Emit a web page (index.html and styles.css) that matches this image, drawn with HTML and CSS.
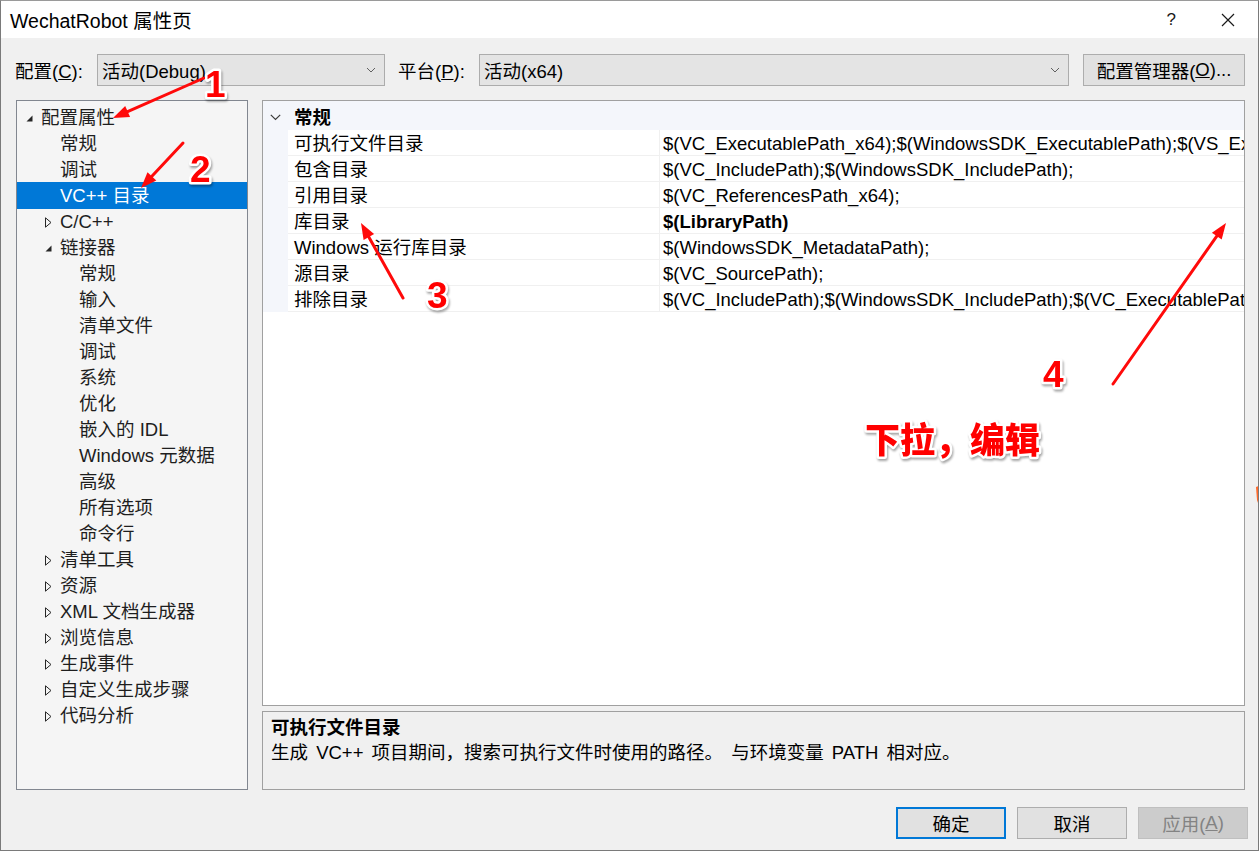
FILE: index.html
```html
<!DOCTYPE html>
<html lang="zh-CN">
<head>
<meta charset="utf-8">
<title>WechatRobot 属性页</title>
<link rel="stylesheet" href="styles.css">
</head>
<body>
<div class="window">
  <div class="titlebar">
    <span class="title">WechatRobot 属性页</span>
    <span class="tb-help">?</span>
    <svg class="tb-close" width="14" height="14" viewBox="0 0 14 14"><path d="M1 1 L13 13 M13 1 L1 13" stroke="#1a1a1a" stroke-width="1.2" fill="none"/></svg>
  </div>
  <div class="content">
    <div class="toprow">
      <span class="lbl lbl1">配置(<u>C</u>):</span>
      <div class="combo combo1"><span>活动(Debug)</span><svg class="chev" width="10" height="6" viewBox="0 0 10 6"><path d="M1 1 L5 5 L9 1" stroke="#606060" stroke-width="1" fill="none"/></svg></div>
      <span class="lbl lbl2">平台(<u>P</u>):</span>
      <div class="combo combo2"><span>活动(x64)</span><svg class="chev" width="10" height="6" viewBox="0 0 10 6"><path d="M1 1 L5 5 L9 1" stroke="#606060" stroke-width="1" fill="none"/></svg></div>
      <div class="btn btn-mgr">配置管理器(<u>O</u>)...</div>
    </div>
    <div class="main">
      <div class="tree">
        <div class="node l0"><span class="tw"><svg width="7" height="7" viewBox="0 0 7 7"><path d="M6.5 0.5 L6.5 6.5 L0.5 6.5 Z" fill="#262626"/></svg></span>配置属性</div>
        <div class="node l1"><span class="tw"></span>常规</div>
        <div class="node l1"><span class="tw"></span>调试</div>
        <div class="node l1 sel"><span class="tw"></span>VC++ 目录</div>
        <div class="node l1"><span class="tw"><svg width="7" height="11" viewBox="0 0 7 11"><path d="M0.5 0.8 L6 5.5 L0.5 10.2 Z" fill="none" stroke="#262626" stroke-width="1"/></svg></span>C/C++</div>
        <div class="node l1"><span class="tw"><svg width="7" height="7" viewBox="0 0 7 7"><path d="M6.5 0.5 L6.5 6.5 L0.5 6.5 Z" fill="#262626"/></svg></span>链接器</div>
        <div class="node l2"><span class="tw"></span>常规</div>
        <div class="node l2"><span class="tw"></span>输入</div>
        <div class="node l2"><span class="tw"></span>清单文件</div>
        <div class="node l2"><span class="tw"></span>调试</div>
        <div class="node l2"><span class="tw"></span>系统</div>
        <div class="node l2"><span class="tw"></span>优化</div>
        <div class="node l2"><span class="tw"></span>嵌入的 IDL</div>
        <div class="node l2"><span class="tw"></span>Windows 元数据</div>
        <div class="node l2"><span class="tw"></span>高级</div>
        <div class="node l2"><span class="tw"></span>所有选项</div>
        <div class="node l2"><span class="tw"></span>命令行</div>
        <div class="node l1"><span class="tw"><svg width="7" height="11" viewBox="0 0 7 11"><path d="M0.5 0.8 L6 5.5 L0.5 10.2 Z" fill="none" stroke="#262626" stroke-width="1"/></svg></span>清单工具</div>
        <div class="node l1"><span class="tw"><svg width="7" height="11" viewBox="0 0 7 11"><path d="M0.5 0.8 L6 5.5 L0.5 10.2 Z" fill="none" stroke="#262626" stroke-width="1"/></svg></span>资源</div>
        <div class="node l1"><span class="tw"><svg width="7" height="11" viewBox="0 0 7 11"><path d="M0.5 0.8 L6 5.5 L0.5 10.2 Z" fill="none" stroke="#262626" stroke-width="1"/></svg></span>XML 文档生成器</div>
        <div class="node l1"><span class="tw"><svg width="7" height="11" viewBox="0 0 7 11"><path d="M0.5 0.8 L6 5.5 L0.5 10.2 Z" fill="none" stroke="#262626" stroke-width="1"/></svg></span>浏览信息</div>
        <div class="node l1"><span class="tw"><svg width="7" height="11" viewBox="0 0 7 11"><path d="M0.5 0.8 L6 5.5 L0.5 10.2 Z" fill="none" stroke="#262626" stroke-width="1"/></svg></span>生成事件</div>
        <div class="node l1"><span class="tw"><svg width="7" height="11" viewBox="0 0 7 11"><path d="M0.5 0.8 L6 5.5 L0.5 10.2 Z" fill="none" stroke="#262626" stroke-width="1"/></svg></span>自定义生成步骤</div>
        <div class="node l1"><span class="tw"><svg width="7" height="11" viewBox="0 0 7 11"><path d="M0.5 0.8 L6 5.5 L0.5 10.2 Z" fill="none" stroke="#262626" stroke-width="1"/></svg></span>代码分析</div>
      </div>
      <div class="rightcol">
        <div class="grid">
          <div class="cat"><span class="cat-tw"><svg width="11" height="7" viewBox="0 0 11 7"><path d="M0.8 0.8 L5.5 5.5 L10.2 0.8" stroke="#3c3c3c" stroke-width="1.2" fill="none"/></svg></span><b>常规</b></div>
          <div class="prow"><span class="gut"></span><span class="pname">可执行文件目录</span><span class="pval">$(VC_ExecutablePath_x64);$(WindowsSDK_ExecutablePath);$(VS_Exe</span></div>
          <div class="prow"><span class="gut"></span><span class="pname">包含目录</span><span class="pval">$(VC_IncludePath);$(WindowsSDK_IncludePath);</span></div>
          <div class="prow"><span class="gut"></span><span class="pname">引用目录</span><span class="pval">$(VC_ReferencesPath_x64);</span></div>
          <div class="prow"><span class="gut"></span><span class="pname">库目录</span><span class="pval bold">$(LibraryPath)</span></div>
          <div class="prow"><span class="gut"></span><span class="pname">Windows 运行库目录</span><span class="pval">$(WindowsSDK_MetadataPath);</span></div>
          <div class="prow"><span class="gut"></span><span class="pname">源目录</span><span class="pval">$(VC_SourcePath);</span></div>
          <div class="prow"><span class="gut"></span><span class="pname">排除目录</span><span class="pval">$(VC_IncludePath);$(WindowsSDK_IncludePath);$(VC_ExecutablePat</span></div>
        </div>
        <div class="desc">
          <div class="desc-title">可执行文件目录</div>
          <div class="desc-text">生成 VC++ 项目期间，搜索可执行文件时使用的路径。 与环境变量 PATH 相对应。</div>
        </div>
      </div>
    </div>
    <div class="btnrow">
      <div class="btn dlg default">确定</div>
      <div class="btn dlg">取消</div>
      <div class="btn dlg disabled">应用(<u>A</u>)</div>
    </div>
  </div>
  <svg class="overlay" width="1259" height="851" viewBox="0 0 1259 851">
    <g class="arrow">
      <line x1="204" y1="78" x2="127.6" y2="111.6"/>
      <polygon points="113,118 125.2,106.1 130.1,117.0"/>
      <line x1="183" y1="143" x2="151.9" y2="176.3"/>
      <polygon points="141,188 147.5,172.2 156.3,180.4"/>
      <line x1="403" y1="298" x2="368.8" y2="237.0"/>
      <polygon points="361,223 374.1,234.0 363.6,239.9"/>
      <line x1="1113" y1="384" x2="1216.8" y2="236.1"/>
      <polygon points="1226,223 1221.7,239.5 1211.9,232.7"/>
    </g>
    <polygon class="orange" points="1256,487 1259,486 1259,506 1257,500"/>
    <text class="anno-num" x="205" y="97">1</text>
    <text class="anno-num" x="190" y="182">2</text>
    <text class="anno-num" x="427" y="308">3</text>
    <text class="anno-num" x="1043" y="387">4</text>
    <text class="anno-cjk" x="865" y="453">下拉，编辑</text>
  </svg>
</div>
</body>
</html>
```
FILE: styles.css
```css
html, body {
  margin: 0;
  padding: 0;
  background: #ffffff;
}
body {
  font-family: "Liberation Sans", "Noto Sans CJK SC", sans-serif;
  font-size: 18.5px;
  color: #000;
}
.window {
  position: relative;
  width: 1259px;
  height: 851px;
  box-sizing: border-box;
  border: 1px solid #7a7a7a;
  border-top-color: #9a9a9a;
  background: #f0f0f0;
  display: flex;
  flex-direction: column;
  overflow: hidden;
}
.titlebar {
  height: 37px;
  flex: none;
  background: #ffffff;
  display: flex;
  align-items: center;
  padding-left: 9px;
  position: relative;
}
.title {
  font-size: 19.5px;
  color: #000;
  flex: 1;
}
.tb-help {
  font-size: 17px;
  color: #1a1a1a;
  margin-right: 45px;
}
.tb-close {
  margin-right: 23px;
}
.content {
  flex: 1;
  display: flex;
  flex-direction: column;
}
.toprow {
  display: flex;
  align-items: center;
  height: 32px;
  margin-top: 16px;
  padding-left: 14px;
}
.lbl { white-space: nowrap; }
.lbl1 { width: 82px; }
.lbl2 { width: 81px; margin-left: 13px; }
.combo {
  height: 32px;
  box-sizing: border-box;
  border: 1px solid #acacac;
  background: #e4e4e4;
  display: flex;
  align-items: center;
  padding-left: 4px;
  padding-right: 8px;
}
.combo span { flex: 1; }
.combo1 { width: 288px; }
.combo2 { width: 590px; }
.chev { flex: none; }
.btn {
  box-sizing: border-box;
  border: 1px solid #adadad;
  background: #e1e1e1;
  display: flex;
  align-items: center;
  justify-content: center;
  white-space: nowrap;
}
.btn-mgr {
  width: 162px;
  height: 32px;
  margin-left: 14px;
}
.main {
  display: flex;
  margin-top: 14px;
  height: 690px;
  padding-left: 15px;
}
.tree {
  width: 232px;
  box-sizing: border-box;
  border: 1px solid #828790;
  background: #f5f5f5;
  padding-top: 4px;
}
.node {
  height: 26px;
  line-height: 26px;
  display: flex;
  align-items: center;
  white-space: nowrap;
  color: #1e1e1e;
}
.node.l0 { padding-left: 5px; }
.node.l1 { padding-left: 24px; }
.node.l2 { padding-left: 43px; }
.node.sel {
  background: #0078d7;
  color: #ffffff;
  margin-top: -1px;
  height: 27px;
}
.tw {
  width: 19px;
  flex: none;
  display: flex;
  align-items: center;
  padding-left: 4px;
  box-sizing: border-box;
}
.rightcol {
  margin-left: 14px;
  width: 983px;
  display: flex;
  flex-direction: column;
}
.grid {
  flex: 1;
  box-sizing: border-box;
  border: 1px solid #a0a0a0;
  background: #ffffff;
  overflow: hidden;
}
.cat {
  height: 29px;
  box-sizing: border-box;
  padding-top: 4px;
  line-height: 25px;
  background: #f4f6fb;
  display: flex;
  align-items: center;
}
.cat-tw {
  width: 31px;
  flex: none;
  display: flex;
  padding-left: 7px;
  box-sizing: border-box;
}
.cat b { font-weight: bold; }
.prow {
  display: flex;
  height: 26px;
  line-height: 27px;
}
.gut {
  width: 25px;
  flex: none;
  background: #f4f6fb;
}
.pname {
  width: 372px;
  flex: none;
  box-sizing: border-box;
  padding-left: 6px;
  border-right: 1px solid #f0f0f0;
  border-bottom: 1px solid #f0f0f0;
  white-space: nowrap;
}
.pval {
  flex: 1;
  min-width: 0;
  box-sizing: border-box;
  padding-left: 3px;
  border-bottom: 1px solid #f0f0f0;
  white-space: nowrap;
  overflow: hidden;
}
.pval.bold { font-weight: bold; }
.desc {
  margin-top: 5px;
  height: 79px;
  box-sizing: border-box;
  border: 1px solid #a0a0a0;
  background: #f0f0f0;
  padding: 3px 0 0 8px;
  line-height: 25px;
}
.desc-title { font-weight: bold; }
.desc-text { word-spacing: 3px; }
.btnrow {
  display: flex;
  justify-content: flex-end;
  margin-top: 17px;
  padding-right: 10px;
  gap: 11px;
}
.btn.dlg {
  width: 110px;
  height: 32px;
}
.btn.default {
  border: 2px solid #0078d7;
}
.btn.disabled {
  background: #cccccc;
  border-color: #bfbfbf;
  color: #838383;
}
.overlay {
  position: absolute;
  left: -1px;
  top: -1px;
  pointer-events: none;
}
.arrow line {
  stroke: #ff0a0a;
  stroke-width: 3;
  stroke-linecap: round;
}
.arrow polygon {
  fill: #ff0a0a;
}
.orange { fill: #ff6a2b; }
.anno-num {
  font-family: "Liberation Sans", sans-serif;
  font-weight: bold;
  font-size: 37px;
  fill: #ff0000;
  stroke: #ffffff;
  stroke-width: 5px;
  paint-order: stroke;
  stroke-linejoin: round;
  filter: drop-shadow(1px 2px 1px rgba(0,0,0,0.35));
}
.anno-cjk {
  font-family: "Noto Sans CJK SC", sans-serif;
  font-weight: 900;
  font-size: 35px;
  fill: #ff0000;
  stroke: #ffffff;
  stroke-width: 5px;
  paint-order: stroke;
  stroke-linejoin: round;
  filter: drop-shadow(1px 2px 1px rgba(0,0,0,0.35));
}
```
